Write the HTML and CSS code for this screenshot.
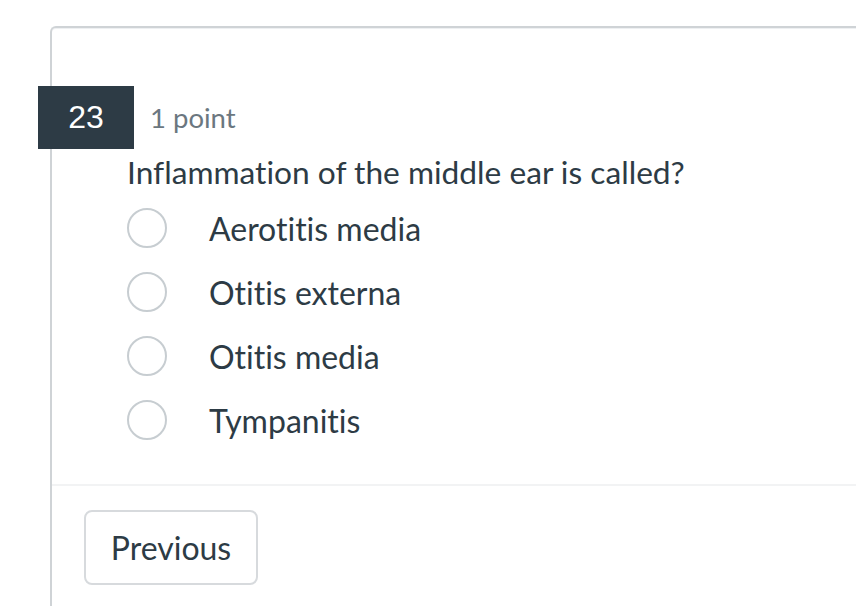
FILE: index.html
```html
<!DOCTYPE html>
<html>
<head>
<meta charset="utf-8">
<link rel="stylesheet" href="styles.css">
</head>
<body>
<div class="card">
  <div class="question">
    <div class="qhead">
      <div class="badge">23</div>
      <div class="points">1 point</div>
    </div>
    <div class="qbody">
      <p class="qtext">Inflammation of the middle ear is called?</p>
      <ul class="options">
        <li class="option"><span class="radio"></span><span class="label">Aerotitis media</span></li>
        <li class="option"><span class="radio"></span><span class="label">Otitis externa</span></li>
        <li class="option"><span class="radio"></span><span class="label">Otitis media</span></li>
        <li class="option"><span class="radio"></span><span class="label">Tympanitis</span></li>
      </ul>
    </div>
  </div>
  <div class="footer">
    <button class="btn">Previous</button>
  </div>
</div>
</body>
</html>
```
FILE: styles.css
```css
html, body {
  margin: 0;
  padding: 0;
  background: #ffffff;
  height: 100%;
  overflow: hidden;
}
body {
  font-family: Lato, "Noto Sans", sans-serif;
  color: #2d3b45;
  font-variant-ligatures: none;
}
.card {
  margin: 26px 0 0 50px;
  border-top: 2px solid #cfd3d6;
  border-left: 2px solid #cfd3d6;
  border-top-left-radius: 6px;
  height: calc(100vh - 26px);
  box-sizing: border-box;
  box-shadow: inset 0 1px 0 #eef0f2;
}
.question {
  padding-top: 58px;
}
.qhead {
  display: flex;
  align-items: center;
  margin-left: -14px;
  height: 63px;
}
.badge {
  width: 96px;
  height: 63px;
  background: #2d3b45;
  color: #ffffff;
  font-family: "Liberation Sans", Arial, sans-serif;
  font-size: 32px;
  display: flex;
  align-items: center;
  justify-content: center;
}
.points {
  margin-left: 16px;
  font-size: 27.5px;
  color: #6b7780;
}
.qbody {
  padding-left: 75px;
}
.qtext {
  margin: 3px 0 0;
  font-size: 31.7px;
  line-height: 40px;
}
.options {
  list-style: none;
  margin: 4px 0 0;
  padding: 0;
}
.option {
  display: flex;
  align-items: center;
  height: 64px;
}
.radio {
  width: 36px;
  height: 36px;
  border: 2px solid #c7cdd1;
  border-radius: 50%;
  flex: none;
}
.label {
  margin-left: 42px;
  font-size: 32px;
}
.footer {
  margin-top: 32px;
  border-top: 2px solid #f2f3f4;
  padding: 24px 0 0 32px;
}
.btn {
  font-family: Lato, "Noto Sans", sans-serif;
  font-variant-ligatures: none;
  font-size: 32px;
  color: #2d3b45;
  background: #ffffff;
  border: 2px solid #d7dadd;
  border-radius: 8px;
  width: 174px;
  height: 75px;
  padding: 0;
}
```
